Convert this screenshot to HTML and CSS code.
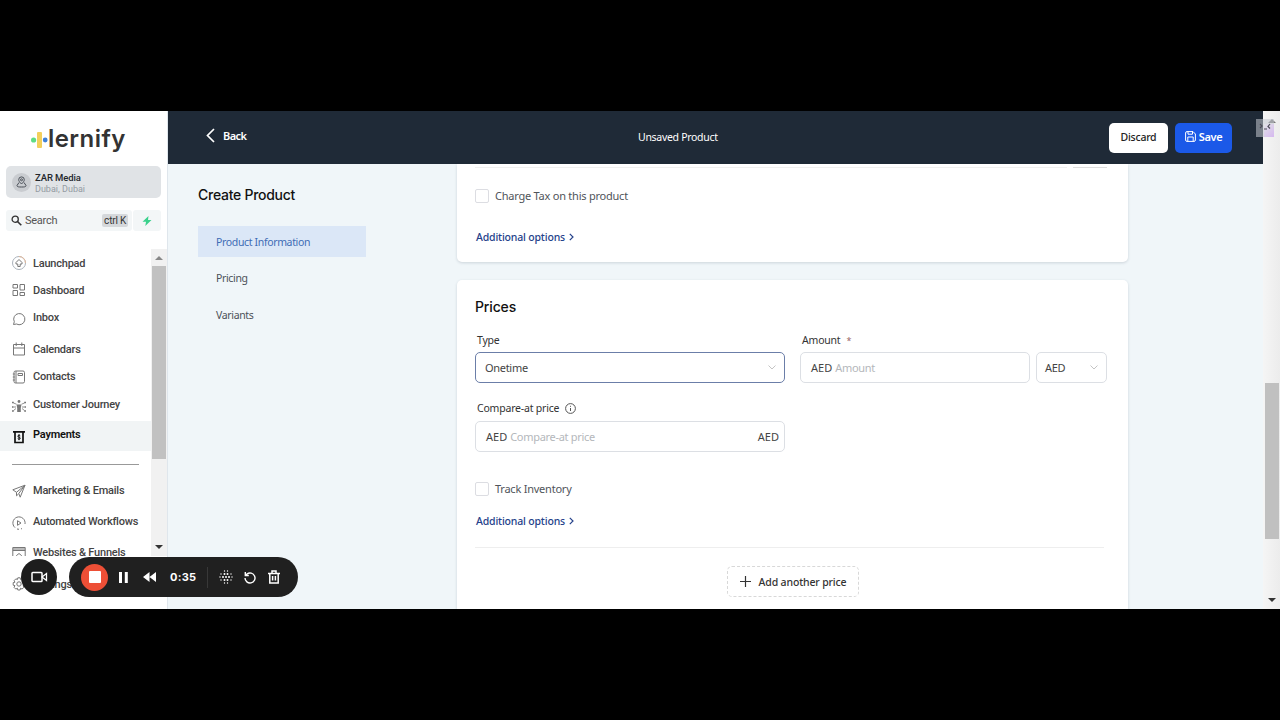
FILE: index.html
```html
<!DOCTYPE html>
<html lang="en">
<head>
<meta charset="utf-8">
<title>Unsaved Product</title>
<link rel="stylesheet" href="styles.css">
</head>
<body>
<div class="app">
  <aside class="sidebar">
    <div class="logo">
      <svg width="17" height="18" viewBox="0 0 17 18"><circle cx="2.600" cy="9" r="2.600" fill="#5fdc85"/><rect x="6" y="1" width="5" height="16" rx="1" fill="#f3cf5b"/><circle cx="14.200" cy="9" r="2.400" fill="#3f80d8"/></svg>
      <span class="logo-text">lernify</span>
    </div>
    <div class="account">
      <span class="avatar"><svg width="11" height="12" viewBox="0 0 11 12" fill="none" stroke="#4a4f57"><circle cx="5.500" cy="3.800" r="1"/><path d="M5.500 8C3.600 6 2.700 5 2.700 3.700a2.800 2.800 0 0 1 5.600 0C8.300 5 7.400 6 5.500 8zM3 6.500L1 9.500c0 1.500 2 1.500 4.500 1.500S10 11 10 9.500L8 6.500"/></svg></span>
      <div class="account-text"><div class="account-name">ZAR Media</div><div class="account-place">Dubai, Dubai</div></div>
    </div>
    <div class="search-row">
      <div class="search">
        <svg width="11" height="11" viewBox="0 0 11 11" fill="none" stroke="#333" stroke-width="1.300"><circle cx="4.200" cy="4.200" r="3.100"/><path d="M6.500 6.500L10.300 10.300" stroke-width="1.600"/></svg>
        <span class="search-label">Search</span><kbd class="kbd">ctrl K</kbd>
      </div>
      <div class="quick"><svg width="10" height="10" viewBox="0 0 10 10"><path d="M6.500 0L.5 5.800H4L3.300 10 9.500 4H6z" fill="#3bd18c"/></svg></div>
    </div>
    <div class="nav-area">
      <nav class="nav">
        <a class="item launchpad"><svg class="ico" viewBox="0 0 14 14"><circle cx="7" cy="7" r="6.500" stroke="#aab2bb"/><path d="M7 .5A6.500 6.500 0 0 1 13.500 7" stroke="#e3b99a"/><path d="M7 3.500L4 6.500V8h1.800v2.500h2.400V8H10V6.500z"/></svg><span>Launchpad</span></a>
        <a class="item dashboard"><svg class="ico" viewBox="0 0 14 14"><path d="M1 1.500h4.500v3.500H1zM8 1.500h4.500v5.500H8zM1 7.500h4.500v5H1zM8 9.500h4.500v3H8z"/></svg><span>Dashboard</span></a>
        <a class="item inbox"><svg class="ico low" viewBox="0 0 14 14"><path d="M1.500 12.500l.8-2.800A5.600 5.600 0 1 1 4.500 12z"/></svg><span>Inbox</span></a>
        <a class="item calendars"><svg class="ico" viewBox="0 0 14 14"><path d="M1.500 2.500h11v10.500h-11zM1.500 6h11M4.200.5v3.500M9.800.5v3.500"/></svg><span>Calendars</span></a>
        <a class="item contacts"><svg class="ico mid" viewBox="0 0 14 14"><rect x="2" y="1" width="10.500" height="12" rx="1.500"/><path d="M4 1v12M6 3.500h4.500v2H6zM.8 4h2M.8 7h2M.8 10h2"/></svg><span>Contacts</span></a>
        <a class="item journey"><svg class="ico low" viewBox="0 0 14 14"><circle cx="7" cy="2.500" r="1.400" fill="#777" stroke="none"/><path d="M4.500 5.500h5L8.800 9v4H5.200V9z" fill="#777" stroke="none"/><path d="M1.500 4l3 1.200M12.500 4l-3 1.200M1.500 11.500l2.500-2M12.500 11.500l-2.500-2M1.500 8h2.500M10 8h2.500" stroke-width=".8"/><path d="M0 3.500h1.800M12.200 3.500H14M0 8h1.500M12.500 8H14M0 12h1.800M12.200 12H14" stroke-width="1.600"/></svg><span>Customer Journey</span></a>
        <a class="item payments"><svg class="ico low dark" viewBox="0 0 14 14"><path d="M1 1.800h12M3 2v10.500h8V2" stroke-width="1.700"/><path d="M8.300 5.800C8 5 5.800 5 5.800 6.200c0 1.300 2.500.7 2.500 2C8.300 9.500 6 9.300 5.700 8.500M7 4.200v6" stroke-width="1"/></svg><span>Payments</span></a>
        <div class="divider"></div>
        <a class="item marketing"><svg class="ico mid" viewBox="0 0 14 14"><path d="M13 1.200L.8 5.800l3.700 2.500L13 1.200 6.800 9.500 8.200 13.200zM4.500 8.300v3.500l2-1.800"/></svg><span>Marketing &amp; Emails</span></a>
        <a class="item workflows"><svg class="ico low" viewBox="0 0 14 14"><path d="M3 11.600A6.100 6.100 0 1 1 13 8M5 13l2 .3M9 13l1-.5M5.500 4.700v4.600L9 7z"/></svg><span>Automated Workflows</span></a>
        <a class="item websites"><svg class="ico mid" viewBox="0 0 14 14"><path d="M.8 13V1.500h12.400V13M.8 4.500h12.400M.8 3h12.400M4.500 12V9.500L7 7.500l2.500 2V12z"/></svg><span>Websites &amp; Funnels</span></a>
      </nav>
      <div class="side-scroll">
        <svg class="cap" width="8" height="4" viewBox="0 0 8 4"><path d="M0 4L4 0l4 4z" fill="#888"/></svg>
        <div class="side-thumb"></div>
        <svg class="cap-end" width="8" height="4" viewBox="0 0 8 4"><path d="M0 0h8L4 4z" fill="#333"/></svg>
      </div>
    </div>
    <a class="item settings"><svg class="ico" viewBox="0 0 14 14"><circle cx="7" cy="7" r="2.200"/><path d="M5.800.8h2.400l.4 1.800 1.500-.9 1.900 1.900-1 1.600 1.700.4v2.600l-1.700.5.900 1.600-1.900 1.800-1.500-.9-.4 1.800H5.800l-.4-1.800-1.600.9L2 10.300l1-1.600-1.800-.5V5.600L3 5.200l-.9-1.500L3.900 1.800l1.500.8z"/></svg><span>Settings</span></a>
  </aside>

  <main class="main">
    <header class="topbar">
      <a class="back"><svg width="9" height="15" viewBox="0 0 9 15" fill="none" stroke="#fff" stroke-width="1.700"><path d="M8 1L1.500 7.500 8 14"/></svg><span>Back</span></a>
      <div class="title">Unsaved Product</div>
      <div class="actions">
        <button class="btn">Discard</button>
        <button class="btn save"><svg width="11" height="11" viewBox="0 0 11 11" fill="none" stroke="#fff"><path d="M2 .6h6L10.400 3v6q0 1.400-1.400 1.400H2Q.6 10.400.6 9V2Q.6.6 2 .6zM3 .6v2.600h4.500V.6M2.800 10.400V6h5.400v4.400"/></svg><span>Save</span></button>
      </div>
    </header>
    <div class="content">
      <section class="steps">
        <h1 class="steps-title">Create Product</h1>
        <a class="step active">Product Information</a>
        <a class="step">Pricing</a>
        <a class="step">Variants</a>
      </section>
      <section class="cards">
        <div class="card info">
          <div class="field-edge"><i class="edge-input"></i><i class="edge-select"></i></div>
          <label class="check tax"><i class="box"></i><span>Charge Tax on this product</span></label>
          <a class="more">Additional options<svg width="5" height="8" viewBox="0 0 5 8" fill="none" stroke="#24418a" stroke-width="1.200"><path d="M.8.8L4 4 .8 7.200"/></svg></a>
        </div>
        <div class="card prices">
          <h2 class="card-title">Prices</h2>
          <div class="fields">
            <div class="col-type">
              <div class="label">Type</div>
              <div class="input focus"><span class="value">Onetime</span><svg class="chev" width="8" height="5" viewBox="0 0 8 5"><path d="M.5.500L4 4 7.500.500"/></svg></div>
            </div>
            <div class="col-amount">
              <div class="label">Amount <span class="star">*</span></div>
              <div class="input pre"><span class="value">AED</span><span class="ph">Amount</span></div>
            </div>
            <div class="col-cur"><div class="input cur"><span class="value">AED</span><svg class="chev" width="8" height="5" viewBox="0 0 8 5"><path d="M.5.500L4 4 7.500.500"/></svg></div></div>
          </div>
          <div class="compare">
            <div class="label"><span class="compare-label">Compare-at price</span><svg width="11" height="11" viewBox="0 0 11 11" fill="none" stroke="#555"><circle cx="5.500" cy="5.500" r="4.900"/><path d="M5.500 5v3M5.500 2.800v1"/></svg></div>
            <div class="input pre"><span class="value">AED</span><span class="ph">Compare-at price</span><span class="value suffix">AED</span></div>
          </div>
          <label class="check track"><i class="box"></i><span>Track Inventory</span></label>
          <a class="more">Additional options<svg width="5" height="8" viewBox="0 0 5 8" fill="none" stroke="#24418a" stroke-width="1.200"><path d="M.8.8L4 4 .8 7.200"/></svg></a>
          <div class="rule"></div>
          <button class="add"><svg width="11" height="11" viewBox="0 0 11 11" stroke="#333" stroke-width="1.200"><path d="M5.500 0v11M0 5.500h11"/></svg><span>Add another price</span></button>
        </div>
      </section>
    </div>
  </main>

  <div class="page-scroll">
    <svg class="page-up" width="8" height="4" viewBox="0 0 8 4"><path d="M0 4L4 0l4 4z" fill="#777"/></svg>
    <div class="page-thumb"></div>
    <svg class="page-down" width="8" height="4" viewBox="0 0 8 4"><path d="M0 0h8L4 4z" fill="#333"/></svg>
  </div>

  <div class="widget"><i class="widget-glow"></i><svg width="18" height="18" viewBox="0 0 18 18" fill="none" stroke="#4c4c58" stroke-width="1.200"><path d="M4 5l2 2-2 2M8 10h3M14 5l-2 2.500 2 2"/></svg></div>
  <div class="camera"><svg width="17" height="12" viewBox="0 0 17 12" fill="none" stroke="#fff" stroke-width="1.500"><rect x="1" y="1.500" width="10" height="9" rx=".8"/><path d="M11 6l4.500-3.500v7z" stroke-width="1.300"/></svg></div>
  <div class="recorder">
    <span class="stop"><i></i></span>
    <svg class="pause" width="9" height="11" viewBox="0 0 9 11"><path d="M0 0h3v11H0zM5.800 0h3v11h-3z" fill="#fff"/></svg>
    <svg class="rewind" width="13" height="10" viewBox="0 0 13 10"><path d="M6.500 0v10L0 5zM13 0v10L6.500 5z" fill="#fff"/></svg>
    <span class="time">0:35</span>
    <i class="bar"></i>
    <svg class="dots" width="14" height="14" viewBox="0 0 14 14" fill="#fff"><circle cx="5.500" cy="4" r="1"/><circle cx="8.500" cy="4" r="1"/><circle cx="4" cy="7" r="1"/><circle cx="7" cy="7" r="1"/><circle cx="10" cy="7" r="1"/><circle cx="5.500" cy="10" r="1"/><circle cx="8.500" cy="10" r="1"/><circle cx="5.500" cy="1" r=".7"/><circle cx="8.500" cy="1" r=".7"/><circle cx="2" cy="4" r=".7"/><circle cx="12" cy="4" r=".7"/><circle cx="1" cy="7" r=".7"/><circle cx="13" cy="7" r=".7"/><circle cx="2" cy="10" r=".7"/><circle cx="12" cy="10" r=".7"/><circle cx="5.500" cy="13" r=".7"/><circle cx="8.500" cy="13" r=".7"/></svg>
    <svg class="redo" width="12" height="13" viewBox="0 0 12 13" fill="none" stroke="#fff" stroke-width="1.400"><path d="M1 7a5 5 0 1 0 2-4L1.500 4.200M1.300 1v3.500h3.500"/></svg>
    <svg class="trash" width="12" height="14" viewBox="0 0 12 14" fill="none" stroke="#fff" stroke-width="1.500"><path d="M0 3.500h12M4 3V1h4v2M1.800 3.500v9.500h8.400V3.500M4.600 6v4.500M7.400 6v4.500"/></svg>
  </div>
</div>
</body>
</html>
```
FILE: styles.css
```css
* { box-sizing: border-box; }
body { margin: 0; padding: 111px 0; background: #000; height: 720px; overflow: hidden; font-family: "Noto Sans", sans-serif; font-size: 11px; color: #333; }
.app { position: relative; display: flex; height: 498px; overflow: hidden; background: #f0f6f9; }
svg { display: block; flex: none; }
button { font: inherit; margin: 0; padding: 0; }

/* Sidebar */
.sidebar { width: 168px; flex: none; background: #fff; border-right: 1px solid #dfe6ec; font-family: Roboto, sans-serif; display: flex; flex-direction: column; }
.logo { display: flex; align-items: center; height: 55px; padding: 2px 0 0 31px; }
.logo-text { font: 600 24px/28px Inter, sans-serif; color: #333; margin: -1px 0 0 0; letter-spacing: .45px; }
.account { display: flex; align-items: center; width: 155px; height: 32px; margin-left: 6px; padding-left: 6px; border-radius: 5px; background: #e0e3e6; }
.avatar { display: grid; place-items: center; width: 19px; height: 19px; border-radius: 50%; background: #c9ccd0; }
.account-text { margin: 2px 0 0 4px; line-height: 11px; }
.account-name { font-size: 9.500px; font-weight: 500; color: #24282d; letter-spacing: -.1px; }
.account-place { font-size: 9px; color: #949ba3; line-height: 12px; }
.search-row { display: flex; width: 155px; height: 21px; margin: 12px 0 0 6px; gap: 1px; }
.search { display: flex; align-items: center; flex: 1; padding: 0 4px 0 5px; background: #f3f6f7; border-radius: 3px; }
.search-label { margin-left: 3px; font-size: 11px; color: #555; letter-spacing: -.25px; }
.kbd { margin-left: auto; padding: 0 2px; font: 400 10px/13px Roboto, sans-serif; letter-spacing: -.2px; color: #333; background: #d5d8db; border-radius: 2px; }
.quick { display: grid; place-items: center; width: 28px; background: #f3f6f7; border-radius: 3px; }
.nav-area { display: flex; height: 307px; margin-top: 18px; overflow: hidden; flex: none; }
.nav { width: 151px; }
.item { display: flex; align-items: center; height: 26px; padding-left: 12px; font-size: 11px; letter-spacing: -.22px; font-weight: 500; color: #444; white-space: nowrap; }
.ico { width: 14px; height: 14px; margin-right: 7px; fill: none; stroke: #777; stroke-width: 1; }
.ico.mid { margin-top: 2px; }
.ico.low { margin-top: 4px; }
.ico.dark { stroke: #111; }
.launchpad { margin-top: 1px; }
.dashboard { margin-top: 1px; }
.inbox { margin-top: 1px; }
.calendars { margin-top: 6px; }
.contacts { margin-top: 1px; }
.journey { margin-top: 2px; }
.payments { margin-top: 4px; height: 30px; padding-bottom: 3px; background: #f1f4f5; color: #111; font-weight: 600; }
.divider { height: 1px; margin: 13px 12px 12px; background: #999; }
.workflows { margin-top: 5px; }
.websites { margin-top: 5px; }
.settings { margin-top: 15px; }
.side-scroll { width: 16px; background: #f1f1f1; padding: 7px 1px; display: flex; flex-direction: column; align-items: center; }
.side-thumb { width: 14px; height: 193px; margin-top: 6px; background: #c1c1c1; }
.cap-end { margin-top: auto; }

/* Main area */
.main { width: 1095px; flex: none; display: flex; flex-direction: column; }
.topbar { display: grid; grid-template-columns: 432px 1fr auto; align-items: center; height: 53px; flex: none; padding: 0 31px 0 38px; background: #1f2a37; color: #fff; font-size: 11px; }
.back { display: flex; align-items: center; gap: 8px; font-weight: 600; margin-top: -5px; letter-spacing: -.6px; }
.title { font-size: 10.500px; letter-spacing: -.3px; margin-top: -2px; }
.actions { display: flex; justify-content: flex-end; gap: 7px; }
.btn { height: 30px; width: 59px; border: 0; border-radius: 5px; padding-bottom: 2px; background: #fff; color: #222; font-size: 10.500px; font-weight: 500; letter-spacing: -.25px; }
.save { width: 57px; display: flex; align-items: center; justify-content: center; gap: 3px; background: #1b59e8; color: #fff; font-size: 11px; font-weight: 600; letter-spacing: -.4px; }
.content { display: flex; flex: 1; min-height: 0; }
.steps { width: 289px; padding: 22px 0 0 30px; }
.steps-title { margin: 0; font: 500 14px/18px Inter, sans-serif; color: #111; letter-spacing: -.27px; }
.step { display: flex; align-items: center; width: 168px; height: 31px; margin-top: 5.500px; padding-left: 18px; color: #4b5158; font-size: 10.500px; letter-spacing: -.35px; }
.step.active { margin-top: 22px; padding-top: 1px; background: #dbe7f7; color: #3e6cb5; }
.cards { width: 671px; }
.card { background: #fff; box-shadow: 0 1px 3px rgba(30,50,70,.17); padding: 0 21px 0 18px; }
.info { height: 98px; border-radius: 0 0 5px 5px; }
.prices { margin-top: 18px; height: 360px; border-radius: 5px; display: flow-root; }
.field-edge { display: flex; gap: 6px; height: 4px; }
.edge-input { flex: 1; border-bottom: 1px solid #f0f0f0; }
.edge-select { width: 34px; border-bottom: 1px solid #ddd; }
.check { display: flex; align-items: center; height: 16px; gap: 6px; color: #50545a; letter-spacing: -.23px; }
.box { width: 14px; height: 14px; border: 1px solid #dcdde2; border-radius: 2px; background: #fff; }
.check span { margin-top: -2px; }
.tax { margin-top: 20px; }
.more { display: flex; align-items: center; gap: 4px; height: 16px; margin-left: 1px; color: #24418a; font-size: 10.500px; font-weight: 500; letter-spacing: -.17px; }
.tax + .more { margin-top: 25px; }
.card-title { margin: 18px 0 0; font: 500 14px/18px Inter, sans-serif; color: #111; letter-spacing: -.15px; }
.fields { display: flex; align-items: flex-end; margin-top: 16px; }
.label { display: flex; align-items: center; height: 16px; padding-left: 2px; margin-bottom: 4px; font-size: 10.500px; letter-spacing: -.2px; color: #333; }
.star { color: #966; font-size: 9px; margin-left: 6px; }
.input { display: flex; align-items: center; height: 31px; padding: 0 8px 1px 9px; border: 1px solid #dcdfe4; border-radius: 5px; background: #fff; color: #444; letter-spacing: -.3px; }
.input.cur { padding-left: 8px; }
.input.pre { padding: 0 5px 1px 10px; }
.input.focus { border-color: #6b7ea8; }
.col-type, .compare { width: 310px; }
.col-amount { width: 230px; margin-left: 15px; }
.col-cur { width: 71px; margin-left: 6px; }
.chev { margin-left: auto; fill: none; stroke: #c4c4c4; }
.ph { color: #b4b7bb; margin-left: 3px; }
.pre .value { letter-spacing: 0; }
.suffix { margin-left: auto; }
.compare { margin-top: 17px; }
.compare .label { margin-bottom: 5px; }
.compare .label svg { margin-left: 6px; }
.track { margin-top: 29px; }
.track + .more { margin-top: 16px; }
.rule { height: 1px; margin: 18px 3px 0 0; background: #eee; }
.add { display: flex; align-items: center; justify-content: center; gap: 8px; width: 132px; height: 31px; margin: 18px 0 0 252px; border: 1px dashed #d8d8d8; border-radius: 5px; background: #fff; color: #333; font-size: 10.500px; font-weight: 500; letter-spacing: -.15px; }

/* Window scrollbar */
.page-scroll { width: 17px; flex: none; display: flex; flex-direction: column; align-items: center; padding: 8px 0 7px; background: linear-gradient(90deg, #f5f5f5, #ececec); }
.page-thumb { width: 14px; height: 156px; margin-top: 260px; background: #c0c0c0; }
.page-down { margin-top: auto; }

/* Floating controls */
.widget { position: absolute; left: 1256px; top: 8px; width: 18px; height: 18px; background: rgba(195,198,207,.55); }
.widget-glow { position: absolute; right: 0; top: 5px; width: 10px; height: 13px; background: linear-gradient(135deg, rgba(255,255,255,.2), #d6b8f0); }
.widget svg { position: relative; }
.camera { position: absolute; left: 21px; top: 448px; width: 36px; height: 36px; border-radius: 50%; background: #1d1d1d; display: grid; place-items: center; }
.recorder { position: absolute; left: 69px; top: 446px; width: 229px; height: 40px; border-radius: 20px; background: #202020; display: flex; align-items: center; padding-left: 12px; }
.stop { display: grid; place-items: center; width: 27px; height: 27px; border-radius: 50%; background: #ed4f36; }
.stop i { width: 12px; height: 12px; border-radius: 1px; background: #fff; }
.pause { margin-left: 11px; }
.rewind { margin-left: 15px; }
.time { width: 26px; margin-left: 14px; color: #fff; font: 700 11px/14px Inter, sans-serif; letter-spacing: .3px; }
.bar { width: 1px; height: 21px; margin-left: 11px; background: #383838; }
.dots { margin-left: 11px; }
.redo { margin-left: 11px; }
.trash { margin-left: 12px; }
```
